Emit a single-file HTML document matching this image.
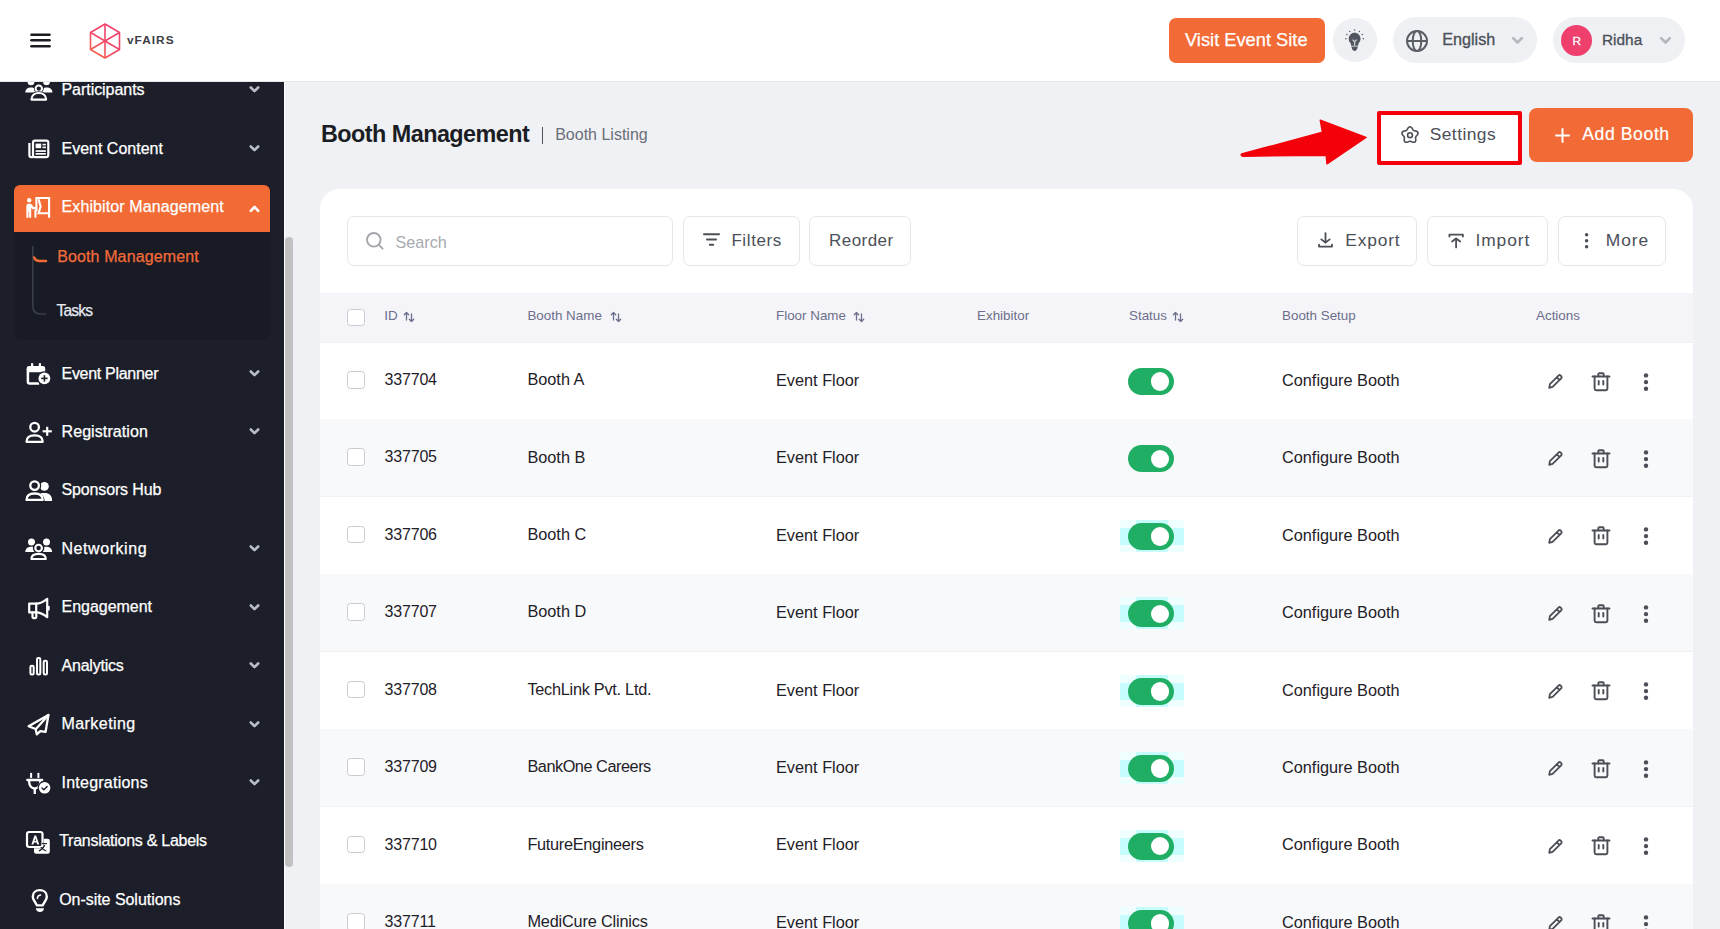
<!DOCTYPE html>
<html><head><meta charset="utf-8"><title>Booth Management</title>
<style>
html,body{margin:0;padding:0;}
body{width:1720px;height:929px;overflow:hidden;position:relative;background:#f0f1f5;font-family:"Liberation Sans",sans-serif;}
.t{position:absolute;white-space:nowrap;}
.r{position:absolute;display:block;}
</style></head><body>
<div class="r" style="left:0px;top:0px;width:1720px;height:81px;background:#fff;"></div>
<div class="r" style="left:0px;top:81px;width:1720px;height:1px;background:#e4e5ea;"></div>
<svg class="r" style="left:30px;top:33px;" width="21" height="15" viewBox="0 0 21 15"><g stroke="#1b1d22" stroke-width="2.6" stroke-linecap="round"><line x1="1.5" y1="1.8" x2="19.5" y2="1.8"/><line x1="1.5" y1="7.3" x2="19.5" y2="7.3"/><line x1="1.5" y1="13.2" x2="19.5" y2="13.2"/></g></svg>
<svg class="r" style="left:88px;top:22px;" width="34" height="38" viewBox="0 0 34 38"><defs><linearGradient id="lg" gradientUnits="userSpaceOnUse" x1="2" y1="36" x2="32" y2="2"><stop offset="0" stop-color="#f7683f"/><stop offset="0.5" stop-color="#f2476a"/><stop offset="1" stop-color="#ef3f6e"/></linearGradient></defs><g fill="none" stroke="url(#lg)" stroke-width="1.6" stroke-linejoin="round"><polygon points="17,2 31.5,10.5 31.5,27.5 17,36 2.5,27.5 2.5,10.5"/><line x1="17" y1="2" x2="17" y2="36"/><line x1="2.5" y1="10.5" x2="31.5" y2="27.5"/><line x1="31.5" y1="10.5" x2="2.5" y2="27.5"/></g></svg>
<div class="t" style="left:127px;top:35.21px;font-size:11.8px;line-height:11.8px;color:#3b3d44;font-weight:700;letter-spacing:1.05px;">vFAIRS</div>
<div class="r" style="left:1169px;top:18px;width:155.5px;height:44.5px;background:#f26a35;border-radius:7px;"></div>
<div class="t" style="left:1185px;top:30.51px;font-size:18.3px;line-height:18.3px;color:#fff;font-weight:400;-webkit-text-stroke:0.25px #fff;">Visit Event Site</div>
<div class="r" style="left:1333px;top:18px;width:44px;height:44px;background:#eef0f3;border-radius:50%;"></div>
<svg class="r" style="left:1344px;top:28px;" width="21" height="25" viewBox="0 0 21 25"><g fill="#50555f"><path d="M6.6 15.2C5.4 14 4.7 12.5 4.7 10.8 4.7 7.5 7.3 4.8 10.6 4.8s5.9 2.7 5.9 6c0 1.7-.7 3.2-1.9 4.4l-.5 2.5H7.1z"/><path d="M7.3 18.4h6.6l-.7 2.4c-.5 1.5-1.4 2.1-2.6 2.1s-2.1-.6-2.6-2.1z"/><circle cx="1.90" cy="10.70" r="0.75"/><circle cx="2.92" cy="6.62" r="0.75"/><circle cx="5.74" cy="3.49" r="0.75"/><circle cx="10.60" cy="2.00" r="0.75"/><circle cx="15.46" cy="3.49" r="0.75"/><circle cx="18.28" cy="6.62" r="0.75"/><circle cx="19.30" cy="10.70" r="0.75"/></g><path d="M8.6 11.6l2 2.2 2-2.2M10.6 13.8v3.6" stroke="#d5d7dc" stroke-width="1.2" fill="none"/></svg>
<div class="r" style="left:1393px;top:17px;width:144px;height:46px;background:#eef0f3;border-radius:23px;"></div>
<svg class="r" style="left:1405px;top:29px;" width="24" height="24" viewBox="0 0 24 24"><g fill="none" stroke="#5a5e66" stroke-width="2"><circle cx="12" cy="12" r="10"/><ellipse cx="12" cy="12" rx="4.3" ry="10"/><line x1="2" y1="12" x2="22" y2="12"/></g></svg>
<div class="t" style="left:1442.2px;top:31.29px;font-size:16.2px;line-height:16.2px;color:#4b4f58;font-weight:400;-webkit-text-stroke:0.3px currentColor;">English</div>
<svg class="r" style="left:1511px;top:36px;" width="13" height="9" viewBox="0 0 13 9"><path d="M2.2 2.2l4.3 4.3 4.3-4.3" fill="none" stroke="#b3b6bc" stroke-width="2.6" stroke-linecap="round" stroke-linejoin="round"/></svg>
<div class="r" style="left:1553px;top:17px;width:131.5px;height:46px;background:#eef0f3;border-radius:23px;"></div>
<div class="r" style="left:1561px;top:25px;width:31px;height:31px;background:#ee3f6d;border-radius:50%;"></div>
<div class="t" style="left:1572.4px;top:35.61px;font-size:11.8px;line-height:11.8px;color:#fff;font-weight:400;-webkit-text-stroke:0.3px #fff;">R</div>
<div class="t" style="left:1602px;top:31.96px;font-size:15.4px;line-height:15.4px;color:#4b4f58;font-weight:400;-webkit-text-stroke:0.3px currentColor;">Ridha</div>
<svg class="r" style="left:1659px;top:36px;" width="13" height="9" viewBox="0 0 13 9"><path d="M2.2 2.2l4.3 4.3 4.3-4.3" fill="none" stroke="#b3b6bc" stroke-width="2.6" stroke-linecap="round" stroke-linejoin="round"/></svg>
<div class="r" style="left:285px;top:82px;width:1435px;height:847px;background:#f0f1f5;"></div>
<div class="r" style="left:0px;top:82px;width:284px;height:847px;background:#1c1f2a;"></div>
<div class="r" style="left:284px;top:82px;width:1px;height:847px;background:#fff;"></div>
<div class="r" style="left:285px;top:237px;width:8px;height:630px;background:#c1c1c1;border-radius:4px;"></div>
<div class="t" style="left:61.5px;top:81.96px;font-size:16px;line-height:16px;color:#fff;font-weight:400;-webkit-text-stroke:0.25px currentColor;letter-spacing:-0.05px;">Participants</div>
<svg class="r" style="left:249px;top:85.0px;" width="11" height="9" viewBox="0 0 11 9"><path d="M1.8 2.5L5.5 6.2 9.2 2.5" fill="none" stroke="#b9bcc3" stroke-width="2.6" stroke-linecap="round" stroke-linejoin="round"/></svg>
<div class="t" style="left:61.5px;top:140.56px;font-size:16px;line-height:16px;color:#fff;font-weight:400;-webkit-text-stroke:0.25px currentColor;letter-spacing:0px;">Event Content</div>
<svg class="r" style="left:249px;top:143.6px;" width="11" height="9" viewBox="0 0 11 9"><path d="M1.8 2.5L5.5 6.2 9.2 2.5" fill="none" stroke="#b9bcc3" stroke-width="2.6" stroke-linecap="round" stroke-linejoin="round"/></svg>
<div class="t" style="left:61.5px;top:365.66px;font-size:16px;line-height:16px;color:#fff;font-weight:400;-webkit-text-stroke:0.25px currentColor;letter-spacing:-0.29px;">Event Planner</div>
<svg class="r" style="left:249px;top:368.7px;" width="11" height="9" viewBox="0 0 11 9"><path d="M1.8 2.5L5.5 6.2 9.2 2.5" fill="none" stroke="#b9bcc3" stroke-width="2.6" stroke-linecap="round" stroke-linejoin="round"/></svg>
<div class="t" style="left:61.5px;top:424.06px;font-size:16px;line-height:16px;color:#fff;font-weight:400;-webkit-text-stroke:0.25px currentColor;letter-spacing:0.09px;">Registration</div>
<svg class="r" style="left:249px;top:427.1px;" width="11" height="9" viewBox="0 0 11 9"><path d="M1.8 2.5L5.5 6.2 9.2 2.5" fill="none" stroke="#b9bcc3" stroke-width="2.6" stroke-linecap="round" stroke-linejoin="round"/></svg>
<div class="t" style="left:61.5px;top:482.46px;font-size:16px;line-height:16px;color:#fff;font-weight:400;-webkit-text-stroke:0.25px currentColor;letter-spacing:-0.14px;">Sponsors Hub</div>
<div class="t" style="left:61.5px;top:541.06px;font-size:16px;line-height:16px;color:#fff;font-weight:400;-webkit-text-stroke:0.25px currentColor;letter-spacing:0.56px;">Networking</div>
<svg class="r" style="left:249px;top:544.1px;" width="11" height="9" viewBox="0 0 11 9"><path d="M1.8 2.5L5.5 6.2 9.2 2.5" fill="none" stroke="#b9bcc3" stroke-width="2.6" stroke-linecap="round" stroke-linejoin="round"/></svg>
<div class="t" style="left:61.5px;top:599.46px;font-size:16px;line-height:16px;color:#fff;font-weight:400;-webkit-text-stroke:0.25px currentColor;letter-spacing:-0.02px;">Engagement</div>
<svg class="r" style="left:249px;top:602.5px;" width="11" height="9" viewBox="0 0 11 9"><path d="M1.8 2.5L5.5 6.2 9.2 2.5" fill="none" stroke="#b9bcc3" stroke-width="2.6" stroke-linecap="round" stroke-linejoin="round"/></svg>
<div class="t" style="left:61.5px;top:657.96px;font-size:16px;line-height:16px;color:#fff;font-weight:400;-webkit-text-stroke:0.25px currentColor;letter-spacing:-0.22px;">Analytics</div>
<svg class="r" style="left:249px;top:661.0px;" width="11" height="9" viewBox="0 0 11 9"><path d="M1.8 2.5L5.5 6.2 9.2 2.5" fill="none" stroke="#b9bcc3" stroke-width="2.6" stroke-linecap="round" stroke-linejoin="round"/></svg>
<div class="t" style="left:61.5px;top:716.46px;font-size:16px;line-height:16px;color:#fff;font-weight:400;-webkit-text-stroke:0.25px currentColor;letter-spacing:0.44px;">Marketing</div>
<svg class="r" style="left:249px;top:719.5px;" width="11" height="9" viewBox="0 0 11 9"><path d="M1.8 2.5L5.5 6.2 9.2 2.5" fill="none" stroke="#b9bcc3" stroke-width="2.6" stroke-linecap="round" stroke-linejoin="round"/></svg>
<div class="t" style="left:61.5px;top:775.16px;font-size:16px;line-height:16px;color:#fff;font-weight:400;-webkit-text-stroke:0.25px currentColor;letter-spacing:0.24px;">Integrations</div>
<svg class="r" style="left:249px;top:778.2px;" width="11" height="9" viewBox="0 0 11 9"><path d="M1.8 2.5L5.5 6.2 9.2 2.5" fill="none" stroke="#b9bcc3" stroke-width="2.6" stroke-linecap="round" stroke-linejoin="round"/></svg>
<div class="t" style="left:59.2px;top:833.36px;font-size:16px;line-height:16px;color:#fff;font-weight:400;-webkit-text-stroke:0.25px currentColor;letter-spacing:-0.27px;">Translations &amp; Labels</div>
<div class="t" style="left:59.2px;top:891.96px;font-size:16px;line-height:16px;color:#fff;font-weight:400;-webkit-text-stroke:0.25px currentColor;letter-spacing:-0.04px;">On-site Solutions</div>
<div class="r" style="left:13.5px;top:184.5px;width:256.5px;height:47.5px;background:#f26b35;border-radius:6px 6px 0 0;"></div>
<div class="t" style="left:61.5px;top:198.66px;font-size:16px;line-height:16px;color:#fff;font-weight:400;-webkit-text-stroke:0.25px currentColor;letter-spacing:0.11px;">Exhibitor Management</div>
<svg class="r" style="left:249px;top:204px;" width="11" height="9" viewBox="0 0 11 9"><path d="M1.8 6.8L5.5 3 9.2 6.8" fill="none" stroke="#fff" stroke-width="2.6" stroke-linecap="round" stroke-linejoin="round"/></svg>
<div class="r" style="left:13.5px;top:232px;width:256.5px;height:108px;background:#181b24;border-radius:0 0 7px 7px;"></div>
<svg class="r" style="left:30px;top:244px;" width="20" height="74" viewBox="0 0 20 74"><path d="M2.8 2v60c0 5 3 8 8 8H16" fill="none" stroke="#3a3e48" stroke-width="1.6"/><path d="M4.2 13.5c1 2.5 3 3.5 5.5 3.5H16" fill="none" stroke="#f26b35" stroke-width="2.6" stroke-linecap="round"/></svg>
<div class="t" style="left:57.2px;top:248.96px;font-size:16px;line-height:16px;color:#f26b3a;font-weight:400;-webkit-text-stroke:0.25px currentColor;letter-spacing:0.12px;">Booth Management</div>
<div class="t" style="left:56.5px;top:302.79px;font-size:15.6px;line-height:15.6px;color:#e6e9ef;font-weight:400;-webkit-text-stroke:0.25px currentColor;letter-spacing:-0.8px;">Tasks</div>
<svg class="r" style="left:0;top:82px" width="284" height="847" viewBox="0 82 284 847"><g fill="#fff"><circle cx="31" cy="81.8" r="3.4"/><circle cx="46.5" cy="81.8" r="3.4"/><path d="M25.3 92.4c0-3.2 2.4-5 5.7-5s5.7 1.8 5.7 5z"/><path d="M41 92.4c0-3.2 2.4-5 5.7-5s5.7 1.8 5.7 5z"/></g><circle cx="38.8" cy="88.6" r="4.9" fill="#1c1f2a"/><circle cx="38.8" cy="88.6" r="3.2" fill="none" stroke="#fff" stroke-width="2"/><path d="M30.3 100.8c0-5 3.4-8 8.5-8s8.5 3 8.5 8z" fill="#1c1f2a" stroke="#1c1f2a" stroke-width="3"/><path d="M31.5 99.6c0-4.2 3-6.6 7.3-6.6s7.3 2.4 7.3 6.6z" fill="none" stroke="#fff" stroke-width="2.2" stroke-linejoin="round"/><g fill="none" stroke="#fff" stroke-width="2.2" stroke-linejoin="round"><rect x="33" y="140.6" width="15.3" height="16.5" rx="2"/><path d="M33 157.1h-1.8c-1 0-1.8-.8-1.8-1.8V143"/></g><g fill="#fff"><rect x="35.6" y="143.6" width="5.6" height="4.6"/><rect x="42.5" y="143.8" width="3.4" height="1.6"/><rect x="42.5" y="146.6" width="3.4" height="1.6"/><rect x="35.6" y="150.2" width="10.3" height="1.7"/><rect x="35.6" y="153" width="10.3" height="1.7"/></g><g fill="#fff"><circle cx="29.2" cy="200.2" r="2.2"/><path d="M26.4 205.6c0-1.1.8-1.9 1.9-1.9h1.9c.8 0 1.4.4 1.8 1l1.5 2.2h3.1v2.3h-4.2l-1.2-1.4v10h-2.1v-6h-.6v6h-2.1z"/><rect x="34.4" y="210" width="2.1" height="7.7"/></g><g fill="none" stroke="#fff" stroke-width="2.1" stroke-linejoin="miter"><path d="M36.4 211.5V198h12.7v19.7"/><path d="M38.6 199.2l2 7.3-2 6.8h9.6"/></g><g fill="#fff"><rect x="26.7" y="366" width="18.5" height="6.2" rx="2.4"/><rect x="31" y="363.2" width="2.2" height="4"/><rect x="38.8" y="363.2" width="2.2" height="4"/></g><path d="M27.9 369v12.8c0 1 .8 1.8 1.8 1.8h9.5" fill="none" stroke="#fff" stroke-width="2.5"/><path d="M44 369.5v3" stroke="#fff" stroke-width="2.4"/><circle cx="44.4" cy="378.4" r="7.2" fill="#1c1f2a"/><circle cx="44.4" cy="378.4" r="5.9" fill="#fff"/><g stroke="#1c1f2a" stroke-width="1.6"><line x1="41.2" y1="378.4" x2="47.6" y2="378.4"/><line x1="44.4" y1="375.2" x2="44.4" y2="381.6"/></g><g fill="none" stroke="#fff" stroke-width="2.3" stroke-linejoin="round"><circle cx="34.6" cy="427.2" r="4.3"/><path d="M26.5 441.8c0-4.6 3.4-6.4 8.1-6.4s8.1 1.8 8.1 6.4z"/></g><g stroke="#fff" stroke-width="2.2"><line x1="42.6" y1="431.3" x2="51.8" y2="431.3"/><line x1="47.2" y1="426.8" x2="47.2" y2="435.8"/></g><g fill="#fff"><circle cx="44.4" cy="486.3" r="4.4"/><path d="M41.5 501c0-.5 0-5.5-1-7.8 1-.2 2.5-.3 4-.3 4.6 0 7.6 2.6 7.6 7.1V501z"/></g><circle cx="34.6" cy="485.6" r="6.6" fill="#1c1f2a"/><path d="M24.5 502.2c0-6.4 4-9.4 10.1-9.4s10.1 3 10.1 9.4z" fill="#1c1f2a"/><g fill="none" stroke="#fff" stroke-width="2.3" stroke-linejoin="round"><circle cx="34.6" cy="485.6" r="4.3"/><path d="M26.5 499.9c0-4.6 3.4-6.4 8.1-6.4s8.1 1.8 8.1 6.4z"/></g><g fill="#fff"><circle cx="31.5" cy="542.1" r="3.5"/><circle cx="46.5" cy="542.1" r="3.5"/><path d="M25.3 552c0-3.5 2.6-5.3 6.2-5.3 2 0 3.6.5 4.6 1.5L35 552z"/><path d="M52.1 552c0-3.5-2.6-5.3-6.2-5.3-2 0-3.6.5-4.6 1.5L42.3 552z"/></g><circle cx="38.6" cy="548" r="5.8" fill="#1c1f2a"/><path d="M28.8 561.5c0-5 3.6-8 9.8-8s9.8 3 9.8 8z" fill="#1c1f2a"/><g fill="none" stroke="#fff" stroke-width="2.1" stroke-linejoin="round"><circle cx="38.6" cy="548" r="3.3"/><path d="M31.4 559c0-3.6 2.8-5.1 7.2-5.1s7.2 1.5 7.2 5.1z"/></g><g fill="none" stroke="#fff" stroke-width="2.2" stroke-linejoin="round" stroke-linecap="round"><path d="M29.2 603.6h7c3.5 0 7.5-2 11-4.8v18.4c-3.5-2.8-7.5-4.8-11-4.8h-7z"/><path d="M32.5 612.4v4.7c0 .6.4 1 1 1h1.8c.6 0 1-.4 1-1v-4.7"/><line x1="36.2" y1="603.6" x2="36.2" y2="612.4"/><path d="M48.6 606.8v2.8"/></g><g fill="none" stroke="#fff" stroke-width="2" stroke-linejoin="round"><rect x="30.4" y="665.8" width="3.3" height="8.8" rx="1.3"/><rect x="37" y="658.1" width="3.3" height="16.5" rx="1.3"/><rect x="43.7" y="660.8" width="3.3" height="13.8" rx="1.3"/></g><g fill="none" stroke="#fff" stroke-width="2.3" stroke-linejoin="round" stroke-linecap="round"><path d="M48.4 715 L28.6 726.2 L35.6 729 L36.8 734.3 L40.3 731.2 L45.6 731.8 Z"/><path d="M48.4 715 L36 729"/></g><g fill="#fff"><rect x="30.1" y="772.9" width="2" height="5"/><rect x="37.4" y="772.9" width="2" height="5"/><rect x="33.6" y="788" width="2.3" height="6"/></g><g fill="none" stroke="#fff" stroke-width="2.3" stroke-linecap="round" stroke-linejoin="round"><line x1="27.3" y1="780" x2="42.2" y2="780"/><path d="M29.2 780.5v1.8c0 3.6 2.5 6.2 5.5 6.2s5.5-2.6 5.5-6.2v-1.8"/></g><circle cx="44.6" cy="787.8" r="7" fill="#1c1f2a"/><circle cx="44.6" cy="787.8" r="5.8" fill="#fff"/><path d="M42 788l1.8 1.7 3.3-3.3" fill="none" stroke="#1c1f2a" stroke-width="1.4" stroke-linecap="round" stroke-linejoin="round"/><rect x="34" y="838.7" width="15.8" height="15.1" rx="2.2" fill="#fff"/><rect x="25.6" y="830.6" width="18.2" height="17.6" rx="2.5" fill="#1c1f2a"/><rect x="27" y="832" width="15.5" height="15" rx="2.2" fill="none" stroke="#fff" stroke-width="2.2"/><path d="M31.4 844.5l3.1-9h1.6l3.1 9h-2l-.6-2h-2.6l-.6 2zm3.1-3.6h1.6l-.8-2.7z" fill="#fff"/><g stroke="#1c1f2a" stroke-width="1.1" fill="none"><path d="M38.8 851c2.5-1 5-3.5 6-6"/><path d="M40.8 847.2c1.5 1.8 3.5 3.3 5.5 3.8"/><line x1="42" y1="843.6" x2="47" y2="843.6"/></g><path d="M37 905.4 L34 900.3 C33.2 899 32.8 897.7 32.8 896.4 C32.8 892.6 35.9 890.1 39.8 890.1 C43.7 890.1 46.8 892.6 46.8 896.4 C46.8 897.7 46.4 899 45.6 900.3 L42.6 905.4 Z" fill="none" stroke="#fff" stroke-width="2.4" stroke-linejoin="round"/><path d="M35.9 908.2h8.1c0 2.2-1.8 3.7-4.05 3.7s-4.05-1.5-4.05-3.7z" fill="#fff"/><path d="M37.4 898.6c0-1.9 1.3-3.4 3.2-3.6" fill="none" stroke="#fff" stroke-width="1.5" stroke-linecap="round"/></svg>
<div class="t" style="left:321px;top:122.79px;font-size:23.4px;line-height:23.4px;color:#1b1d24;font-weight:700;letter-spacing:-0.55px;">Booth Management</div>
<div class="r" style="left:542px;top:127px;width:1.3px;height:17px;background:#50535a;"></div>
<div class="t" style="left:555.2px;top:126.66px;font-size:16px;line-height:16px;color:#6a6e77;font-weight:400;">Booth Listing</div>
<div class="r" style="left:1380px;top:114px;width:139px;height:47px;background:#fff;border-radius:6px;"></div>
<div class="r" style="left:1377px;top:111px;width:145px;height:54px;background:transparent;border:4.3px solid #f4000b;box-sizing:border-box;border-radius:2px;"></div>
<svg class="r" style="left:1401.3px;top:126.3px;" width="18" height="18" viewBox="0 0 18 18"><g fill="none" stroke="#4b4f58" stroke-width="1.6" stroke-linejoin="round"><path d="M16.10 9.20 L15.86 9.49 L15.62 9.76 L15.39 10.01 L15.18 10.24 L14.99 10.47 L14.84 10.70 L14.73 10.93 L14.65 11.17 L14.61 11.42 L14.60 11.69 L14.61 11.99 L14.64 12.30 L14.68 12.64 L14.72 13.00 L14.74 13.37 L14.77 13.77 L14.76 14.17 L14.71 14.56 L14.62 14.94 L14.48 15.28 L14.28 15.59 L14.04 15.85 L13.76 16.05 L13.44 16.20 L13.09 16.29 L12.72 16.32 L12.34 16.29 L11.95 16.21 L11.57 16.10 L11.19 15.95 L10.85 15.81 L10.52 15.67 L10.21 15.52 L9.92 15.40 L9.64 15.29 L9.38 15.22 L9.13 15.18 L8.87 15.18 L8.62 15.22 L8.36 15.29 L8.08 15.40 L7.79 15.52 L7.48 15.67 L7.15 15.81 L6.81 15.95 L6.43 16.10 L6.05 16.21 L5.66 16.29 L5.28 16.32 L4.91 16.29 L4.56 16.20 L4.24 16.05 L3.96 15.85 L3.72 15.59 L3.52 15.28 L3.38 14.94 L3.29 14.56 L3.24 14.17 L3.23 13.77 L3.26 13.37 L3.28 13.00 L3.32 12.64 L3.36 12.30 L3.39 11.99 L3.40 11.69 L3.39 11.42 L3.35 11.17 L3.27 10.93 L3.16 10.70 L3.01 10.47 L2.82 10.24 L2.61 10.01 L2.38 9.76 L2.14 9.49 L1.90 9.20 L1.65 8.89 L1.42 8.56 L1.23 8.22 L1.08 7.86 L1.00 7.50 L0.97 7.14 L1.01 6.79 L1.12 6.46 L1.29 6.15 L1.52 5.87 L1.81 5.63 L2.13 5.43 L2.49 5.26 L2.87 5.13 L3.26 5.03 L3.62 4.94 L3.97 4.86 L4.31 4.79 L4.62 4.72 L4.90 4.65 L5.16 4.55 L5.38 4.44 L5.59 4.29 L5.77 4.11 L5.94 3.89 L6.10 3.65 L6.26 3.37 L6.43 3.08 L6.61 2.76 L6.81 2.45 L7.02 2.11 L7.26 1.79 L7.53 1.50 L7.83 1.26 L8.14 1.06 L8.48 0.93 L8.83 0.86 L9.17 0.86 L9.52 0.93 L9.86 1.06 L10.17 1.26 L10.47 1.50 L10.74 1.79 L10.98 2.11 L11.19 2.45 L11.39 2.76 L11.57 3.08 L11.74 3.37 L11.90 3.65 L12.06 3.89 L12.23 4.11 L12.41 4.29 L12.62 4.44 L12.84 4.55 L13.10 4.65 L13.38 4.72 L13.69 4.79 L14.03 4.86 L14.38 4.94 L14.74 5.03 L15.13 5.13 L15.51 5.26 L15.87 5.43 L16.19 5.63 L16.48 5.87 L16.71 6.15 L16.88 6.46 L16.99 6.79 L17.03 7.14 L17.00 7.50 L16.92 7.86 L16.77 8.22 L16.58 8.56 L16.35 8.89 L16.10 9.20Z"/><circle cx="9" cy="9.2" r="2.4"/></g></svg>
<div class="t" style="left:1429.7px;top:125.77px;font-size:17.4px;line-height:17.4px;color:#4b4f58;font-weight:400;letter-spacing:0.45px;">Settings</div>
<svg class="r" style="left:1236px;top:116px;" width="134" height="52" viewBox="0 0 134 52"><path d="M6.5 37.8 L86.5 16.3 L84.3 4.2 L130 21.5 L91 47.8 L90.2 39.2 L6.8 40.2 Q3.6 39 6.5 37.8 Z" fill="#f4000b" stroke="#f4000b" stroke-width="1.5" stroke-linejoin="round"/></svg>
<div class="r" style="left:1529px;top:108px;width:164px;height:53.5px;background:#f26a35;border-radius:8px;"></div>
<svg class="r" style="left:1555px;top:128px;" width="15" height="15" viewBox="0 0 15 15"><g stroke="#fff" stroke-width="2" stroke-linecap="round"><line x1="7.5" y1="1" x2="7.5" y2="14"/><line x1="1" y1="7.5" x2="14" y2="7.5"/></g></svg>
<div class="t" style="left:1582.2px;top:125.60px;font-size:17.6px;line-height:17.6px;color:#fff;font-weight:400;letter-spacing:0.6px;-webkit-text-stroke:0.2px #fff;">Add Booth</div>
<div class="r" style="left:320px;top:189px;width:1373px;height:800px;background:#fff;border-radius:20px 20px 0 0;"></div>
<div class="r" style="left:347px;top:216px;width:326px;height:49.5px;background:#fff;border:1.2px solid #e5e6ea;border-radius:7px;box-sizing:border-box;"></div>
<svg class="r" style="left:365px;top:231px;" width="20" height="20" viewBox="0 0 20 20"><g fill="none" stroke="#a3a6ac" stroke-width="1.9" stroke-linecap="round"><circle cx="8.8" cy="8.8" r="6.8"/><line x1="13.8" y1="13.8" x2="17.6" y2="17.6"/></g></svg>
<div class="t" style="left:395.5px;top:233.89px;font-size:16.2px;line-height:16.2px;color:#a7aab0;font-weight:400;">Search</div>
<div class="r" style="left:683px;top:216px;width:116.5px;height:49.5px;background:#fff;border:1.2px solid #e5e6ea;border-radius:7px;box-sizing:border-box;"></div>
<svg class="r" style="left:702px;top:232px;" width="19" height="15" viewBox="0 0 19 15"><g stroke="#4b4f58" stroke-width="2" stroke-linecap="round"><line x1="2" y1="2.2" x2="17" y2="2.2"/><line x1="5" y1="7.5" x2="14" y2="7.5"/><line x1="7.8" y1="12.8" x2="11.2" y2="12.8"/></g></svg>
<div class="t" style="left:731.4px;top:232.21px;font-size:17px;line-height:17px;color:#4b4f58;font-weight:400;letter-spacing:0.6px;">Filters</div>
<div class="r" style="left:809px;top:216px;width:101.5px;height:49.5px;background:#fff;border:1.2px solid #e5e6ea;border-radius:7px;box-sizing:border-box;"></div>
<div class="t" style="left:829px;top:232.21px;font-size:17px;line-height:17px;color:#4b4f58;font-weight:400;letter-spacing:0.45px;">Reorder</div>
<div class="r" style="left:1297px;top:216px;width:120px;height:49.5px;background:#fff;border:1.2px solid #e5e6ea;border-radius:7px;box-sizing:border-box;"></div>
<svg class="r" style="left:1317px;top:232px;" width="17" height="17" viewBox="0 0 17 17"><g fill="none" stroke="#4b4f58" stroke-width="1.8" stroke-linecap="round" stroke-linejoin="round"><line x1="8.5" y1="1.2" x2="8.5" y2="10.3"/><path d="M4.3 7.4l4.2 3.1 4.2-3.1"/><path d="M2 12.6v2h13v-2"/></g></svg>
<div class="t" style="left:1345.3px;top:231.87px;font-size:17.4px;line-height:17.4px;color:#4b4f58;font-weight:400;letter-spacing:0.8px;">Export</div>
<div class="r" style="left:1426.5px;top:216px;width:121px;height:49.5px;background:#fff;border:1.2px solid #e5e6ea;border-radius:7px;box-sizing:border-box;"></div>
<svg class="r" style="left:1447px;top:232px;" width="17" height="17" viewBox="0 0 17 17"><g fill="none" stroke="#4b4f58" stroke-width="1.8" stroke-linecap="round" stroke-linejoin="round"><path d="M2.4 4.5V2.7h13.5v1.8"/><path d="M5.1 9.5l4-3 4.1 3"/><line x1="9.1" y1="6.8" x2="9.1" y2="15.4"/></g></svg>
<div class="t" style="left:1475.5px;top:231.87px;font-size:17.4px;line-height:17.4px;color:#4b4f58;font-weight:400;letter-spacing:0.9px;">Import</div>
<div class="r" style="left:1557.5px;top:216px;width:108px;height:49.5px;background:#fff;border:1.2px solid #e5e6ea;border-radius:7px;box-sizing:border-box;"></div>
<svg class="r" style="left:1584px;top:232px;" width="6" height="18" viewBox="0 0 6 18"><g fill="#4b4f58"><circle cx="2.6" cy="2.7" r="1.75"/><circle cx="2.6" cy="8.8" r="1.75"/><circle cx="2.6" cy="14.8" r="1.75"/></g></svg>
<div class="t" style="left:1605.8px;top:231.87px;font-size:17.4px;line-height:17.4px;color:#4b4f58;font-weight:400;letter-spacing:0.9px;">More</div>
<div class="r" style="left:320px;top:292.5px;width:1373px;height:49.5px;background:#f5f5f9;"></div>
<div class="r" style="left:320px;top:341.5px;width:1373px;height:1px;background:#eeeff3;"></div>
<div class="r" style="left:347px;top:308.8px;width:17.5px;height:17.5px;background:#fff;border:1.2px solid #c9cbd0;border-radius:3.5px;box-sizing:border-box;"></div>
<div class="t" style="left:384.2px;top:308.96px;font-size:13.4px;line-height:13.4px;color:#6c6f8b;font-weight:400;">ID</div>
<svg class="r" style="left:403px;top:311px;" width="12" height="12" viewBox="0 0 12 12"><g fill="none" stroke="#6c6f8b" stroke-width="1.3" stroke-linecap="round" stroke-linejoin="round"><path d="M3.5 9V1.5M1.3 3.7L3.5 1.5 5.7 3.7"/><path d="M8.5 3v7.5M6.3 8.3l2.2 2.2 2.2-2.2"/></g></svg>
<div class="t" style="left:527.4px;top:308.96px;font-size:13.4px;line-height:13.4px;color:#6c6f8b;font-weight:400;">Booth Name</div>
<svg class="r" style="left:609.5px;top:311px;" width="12" height="12" viewBox="0 0 12 12"><g fill="none" stroke="#6c6f8b" stroke-width="1.3" stroke-linecap="round" stroke-linejoin="round"><path d="M3.5 9V1.5M1.3 3.7L3.5 1.5 5.7 3.7"/><path d="M8.5 3v7.5M6.3 8.3l2.2 2.2 2.2-2.2"/></g></svg>
<div class="t" style="left:776px;top:308.96px;font-size:13.4px;line-height:13.4px;color:#6c6f8b;font-weight:400;">Floor Name</div>
<svg class="r" style="left:853px;top:311px;" width="12" height="12" viewBox="0 0 12 12"><g fill="none" stroke="#6c6f8b" stroke-width="1.3" stroke-linecap="round" stroke-linejoin="round"><path d="M3.5 9V1.5M1.3 3.7L3.5 1.5 5.7 3.7"/><path d="M8.5 3v7.5M6.3 8.3l2.2 2.2 2.2-2.2"/></g></svg>
<div class="t" style="left:977px;top:308.96px;font-size:13.4px;line-height:13.4px;color:#6c6f8b;font-weight:400;">Exhibitor</div>
<div class="t" style="left:1129px;top:308.96px;font-size:13.4px;line-height:13.4px;color:#6c6f8b;font-weight:400;">Status</div>
<svg class="r" style="left:1172px;top:311px;" width="12" height="12" viewBox="0 0 12 12"><g fill="none" stroke="#6c6f8b" stroke-width="1.3" stroke-linecap="round" stroke-linejoin="round"><path d="M3.5 9V1.5M1.3 3.7L3.5 1.5 5.7 3.7"/><path d="M8.5 3v7.5M6.3 8.3l2.2 2.2 2.2-2.2"/></g></svg>
<div class="t" style="left:1282px;top:308.96px;font-size:13.4px;line-height:13.4px;color:#6c6f8b;font-weight:400;">Booth Setup</div>
<div class="t" style="left:1536px;top:308.96px;font-size:13.4px;line-height:13.4px;color:#6c6f8b;font-weight:400;">Actions</div>
<div class="r" style="left:347px;top:371.0px;width:17.5px;height:17.5px;background:#fff;border:1.2px solid #c9cbd0;border-radius:3.5px;box-sizing:border-box;"></div>
<div class="t" style="left:384.6px;top:371.96px;font-size:16px;line-height:16px;color:#1f2128;font-weight:400;letter-spacing:-0.2px;">337704</div>
<div class="t" style="left:527.4px;top:371.10px;font-size:16.3px;line-height:16.3px;color:#1f2128;font-weight:400;letter-spacing:0px;">Booth A</div>
<div class="t" style="left:776px;top:371.70px;font-size:16.3px;line-height:16.3px;color:#1f2128;font-weight:400;">Event Floor</div>
<div class="r" style="left:1128px;top:368.0px;width:45.5px;height:27px;background:#20ae65;border-radius:14px;"></div>
<div class="r" style="left:1150.5px;top:372.2px;width:18.6px;height:18.6px;background:#fff;border-radius:50%;"></div>
<div class="t" style="left:1282px;top:371.70px;font-size:16.3px;line-height:16.3px;color:#1f2128;font-weight:400;">Configure Booth</div>
<svg class="r" style="left:1547px;top:373.0px;" width="17" height="17" viewBox="0 0 17 17"><path d="M2.2 14.8l.7-3.6 8.6-8.6c.6-.6 1.5-.6 2.1 0l.6.6c.6.6.6 1.5 0 2.1l-8.6 8.6zM9.8 4.3l2.9 2.9" fill="none" stroke="#4b4e56" stroke-width="1.8" stroke-linejoin="round"/></svg>
<svg class="r" style="left:1591px;top:371.5px;" width="20" height="20" viewBox="0 0 20 20"><g fill="none" stroke="#4b4e56" stroke-width="1.9" stroke-linejoin="round" stroke-linecap="round"><line x1="1.5" y1="4.5" x2="18.5" y2="4.5"/><path d="M7.3 4.2V2.2c0-.5.4-.9.9-.9h3.6c.5 0 .9.4.9.9v2"/><path d="M3.6 4.5v12.3c0 .9.6 1.5 1.5 1.5h9.8c.9 0 1.5-.6 1.5-1.5V4.5"/><line x1="7.7" y1="9" x2="7.7" y2="12.5"/><line x1="12.3" y1="9" x2="12.3" y2="12.5"/></g></svg>
<svg class="r" style="left:1643px;top:372.5px;" width="6" height="18" viewBox="0 0 6 18"><g fill="#4b4e56"><circle cx="3" cy="2.4" r="2.2"/><circle cx="3" cy="9.1" r="2.2"/><circle cx="3" cy="15.8" r="2.2"/></g></svg>
<div class="r" style="left:320px;top:419.45px;width:1373px;height:77.45px;background:#f8f9fb;"></div>
<div class="r" style="left:320px;top:495.9px;width:1373px;height:1px;background:#f0f1f3;"></div>
<div class="r" style="left:347px;top:448.45px;width:17.5px;height:17.5px;background:#fff;border:1.2px solid #c9cbd0;border-radius:3.5px;box-sizing:border-box;"></div>
<div class="t" style="left:384.6px;top:449.41px;font-size:16px;line-height:16px;color:#1f2128;font-weight:400;letter-spacing:-0.2px;">337705</div>
<div class="t" style="left:527.4px;top:448.55px;font-size:16.3px;line-height:16.3px;color:#1f2128;font-weight:400;letter-spacing:0px;">Booth B</div>
<div class="t" style="left:776px;top:449.15px;font-size:16.3px;line-height:16.3px;color:#1f2128;font-weight:400;">Event Floor</div>
<div class="r" style="left:1128px;top:445.45px;width:45.5px;height:27px;background:#20ae65;border-radius:14px;"></div>
<div class="r" style="left:1150.5px;top:449.65px;width:18.6px;height:18.6px;background:#fff;border-radius:50%;"></div>
<div class="t" style="left:1282px;top:449.15px;font-size:16.3px;line-height:16.3px;color:#1f2128;font-weight:400;">Configure Booth</div>
<svg class="r" style="left:1547px;top:450.45px;" width="17" height="17" viewBox="0 0 17 17"><path d="M2.2 14.8l.7-3.6 8.6-8.6c.6-.6 1.5-.6 2.1 0l.6.6c.6.6.6 1.5 0 2.1l-8.6 8.6zM9.8 4.3l2.9 2.9" fill="none" stroke="#4b4e56" stroke-width="1.8" stroke-linejoin="round"/></svg>
<svg class="r" style="left:1591px;top:448.95px;" width="20" height="20" viewBox="0 0 20 20"><g fill="none" stroke="#4b4e56" stroke-width="1.9" stroke-linejoin="round" stroke-linecap="round"><line x1="1.5" y1="4.5" x2="18.5" y2="4.5"/><path d="M7.3 4.2V2.2c0-.5.4-.9.9-.9h3.6c.5 0 .9.4.9.9v2"/><path d="M3.6 4.5v12.3c0 .9.6 1.5 1.5 1.5h9.8c.9 0 1.5-.6 1.5-1.5V4.5"/><line x1="7.7" y1="9" x2="7.7" y2="12.5"/><line x1="12.3" y1="9" x2="12.3" y2="12.5"/></g></svg>
<svg class="r" style="left:1643px;top:449.95px;" width="6" height="18" viewBox="0 0 6 18"><g fill="#4b4e56"><circle cx="3" cy="2.4" r="2.2"/><circle cx="3" cy="9.1" r="2.2"/><circle cx="3" cy="15.8" r="2.2"/></g></svg>
<div class="r" style="left:347px;top:525.9px;width:17.5px;height:17.5px;background:#fff;border:1.2px solid #c9cbd0;border-radius:3.5px;box-sizing:border-box;"></div>
<div class="t" style="left:384.6px;top:526.86px;font-size:16px;line-height:16px;color:#1f2128;font-weight:400;letter-spacing:-0.2px;">337706</div>
<div class="t" style="left:527.4px;top:526.00px;font-size:16.3px;line-height:16.3px;color:#1f2128;font-weight:400;letter-spacing:0px;">Booth C</div>
<div class="t" style="left:776px;top:526.60px;font-size:16.3px;line-height:16.3px;color:#1f2128;font-weight:400;">Event Floor</div>
<div class="r" style="left:1120px;top:519.9px;width:64px;height:32px;background:#effefe;"></div>
<div class="r" style="left:1120px;top:527.9px;width:64px;height:17px;background:#c6fcfc;"></div>
<div class="r" style="left:1136px;top:519.9px;width:32px;height:32px;background:#c6fcfc;"></div>
<div class="r" style="left:1128px;top:522.9px;width:45.5px;height:27px;background:#20ae65;border-radius:14px;"></div>
<div class="r" style="left:1150.5px;top:527.1px;width:18.6px;height:18.6px;background:#fff;border-radius:50%;"></div>
<div class="t" style="left:1282px;top:526.60px;font-size:16.3px;line-height:16.3px;color:#1f2128;font-weight:400;">Configure Booth</div>
<svg class="r" style="left:1547px;top:527.9px;" width="17" height="17" viewBox="0 0 17 17"><path d="M2.2 14.8l.7-3.6 8.6-8.6c.6-.6 1.5-.6 2.1 0l.6.6c.6.6.6 1.5 0 2.1l-8.6 8.6zM9.8 4.3l2.9 2.9" fill="none" stroke="#4b4e56" stroke-width="1.8" stroke-linejoin="round"/></svg>
<svg class="r" style="left:1591px;top:526.4px;" width="20" height="20" viewBox="0 0 20 20"><g fill="none" stroke="#4b4e56" stroke-width="1.9" stroke-linejoin="round" stroke-linecap="round"><line x1="1.5" y1="4.5" x2="18.5" y2="4.5"/><path d="M7.3 4.2V2.2c0-.5.4-.9.9-.9h3.6c.5 0 .9.4.9.9v2"/><path d="M3.6 4.5v12.3c0 .9.6 1.5 1.5 1.5h9.8c.9 0 1.5-.6 1.5-1.5V4.5"/><line x1="7.7" y1="9" x2="7.7" y2="12.5"/><line x1="12.3" y1="9" x2="12.3" y2="12.5"/></g></svg>
<svg class="r" style="left:1643px;top:527.4px;" width="6" height="18" viewBox="0 0 6 18"><g fill="#4b4e56"><circle cx="3" cy="2.4" r="2.2"/><circle cx="3" cy="9.1" r="2.2"/><circle cx="3" cy="15.8" r="2.2"/></g></svg>
<div class="r" style="left:320px;top:574.35px;width:1373px;height:77.45px;background:#f8f9fb;"></div>
<div class="r" style="left:320px;top:650.8000000000001px;width:1373px;height:1px;background:#f0f1f3;"></div>
<div class="r" style="left:347px;top:603.35px;width:17.5px;height:17.5px;background:#fff;border:1.2px solid #c9cbd0;border-radius:3.5px;box-sizing:border-box;"></div>
<div class="t" style="left:384.6px;top:604.31px;font-size:16px;line-height:16px;color:#1f2128;font-weight:400;letter-spacing:-0.2px;">337707</div>
<div class="t" style="left:527.4px;top:603.45px;font-size:16.3px;line-height:16.3px;color:#1f2128;font-weight:400;letter-spacing:0px;">Booth D</div>
<div class="t" style="left:776px;top:604.05px;font-size:16.3px;line-height:16.3px;color:#1f2128;font-weight:400;">Event Floor</div>
<div class="r" style="left:1120px;top:597.35px;width:64px;height:32px;background:#effefe;"></div>
<div class="r" style="left:1120px;top:605.35px;width:64px;height:17px;background:#c6fcfc;"></div>
<div class="r" style="left:1136px;top:597.35px;width:32px;height:32px;background:#c6fcfc;"></div>
<div class="r" style="left:1128px;top:600.35px;width:45.5px;height:27px;background:#20ae65;border-radius:14px;"></div>
<div class="r" style="left:1150.5px;top:604.5500000000001px;width:18.6px;height:18.6px;background:#fff;border-radius:50%;"></div>
<div class="t" style="left:1282px;top:604.05px;font-size:16.3px;line-height:16.3px;color:#1f2128;font-weight:400;">Configure Booth</div>
<svg class="r" style="left:1547px;top:605.35px;" width="17" height="17" viewBox="0 0 17 17"><path d="M2.2 14.8l.7-3.6 8.6-8.6c.6-.6 1.5-.6 2.1 0l.6.6c.6.6.6 1.5 0 2.1l-8.6 8.6zM9.8 4.3l2.9 2.9" fill="none" stroke="#4b4e56" stroke-width="1.8" stroke-linejoin="round"/></svg>
<svg class="r" style="left:1591px;top:603.85px;" width="20" height="20" viewBox="0 0 20 20"><g fill="none" stroke="#4b4e56" stroke-width="1.9" stroke-linejoin="round" stroke-linecap="round"><line x1="1.5" y1="4.5" x2="18.5" y2="4.5"/><path d="M7.3 4.2V2.2c0-.5.4-.9.9-.9h3.6c.5 0 .9.4.9.9v2"/><path d="M3.6 4.5v12.3c0 .9.6 1.5 1.5 1.5h9.8c.9 0 1.5-.6 1.5-1.5V4.5"/><line x1="7.7" y1="9" x2="7.7" y2="12.5"/><line x1="12.3" y1="9" x2="12.3" y2="12.5"/></g></svg>
<svg class="r" style="left:1643px;top:604.85px;" width="6" height="18" viewBox="0 0 6 18"><g fill="#4b4e56"><circle cx="3" cy="2.4" r="2.2"/><circle cx="3" cy="9.1" r="2.2"/><circle cx="3" cy="15.8" r="2.2"/></g></svg>
<div class="r" style="left:347px;top:680.8px;width:17.5px;height:17.5px;background:#fff;border:1.2px solid #c9cbd0;border-radius:3.5px;box-sizing:border-box;"></div>
<div class="t" style="left:384.6px;top:681.76px;font-size:16px;line-height:16px;color:#1f2128;font-weight:400;letter-spacing:-0.2px;">337708</div>
<div class="t" style="left:527.4px;top:680.90px;font-size:16.3px;line-height:16.3px;color:#1f2128;font-weight:400;letter-spacing:-0.26px;">TechLink Pvt. Ltd.</div>
<div class="t" style="left:776px;top:681.50px;font-size:16.3px;line-height:16.3px;color:#1f2128;font-weight:400;">Event Floor</div>
<div class="r" style="left:1120px;top:674.8px;width:64px;height:32px;background:#effefe;"></div>
<div class="r" style="left:1120px;top:682.8px;width:64px;height:17px;background:#c6fcfc;"></div>
<div class="r" style="left:1136px;top:674.8px;width:32px;height:32px;background:#c6fcfc;"></div>
<div class="r" style="left:1128px;top:677.8px;width:45.5px;height:27px;background:#20ae65;border-radius:14px;"></div>
<div class="r" style="left:1150.5px;top:682.0px;width:18.6px;height:18.6px;background:#fff;border-radius:50%;"></div>
<div class="t" style="left:1282px;top:681.50px;font-size:16.3px;line-height:16.3px;color:#1f2128;font-weight:400;">Configure Booth</div>
<svg class="r" style="left:1547px;top:682.8px;" width="17" height="17" viewBox="0 0 17 17"><path d="M2.2 14.8l.7-3.6 8.6-8.6c.6-.6 1.5-.6 2.1 0l.6.6c.6.6.6 1.5 0 2.1l-8.6 8.6zM9.8 4.3l2.9 2.9" fill="none" stroke="#4b4e56" stroke-width="1.8" stroke-linejoin="round"/></svg>
<svg class="r" style="left:1591px;top:681.3px;" width="20" height="20" viewBox="0 0 20 20"><g fill="none" stroke="#4b4e56" stroke-width="1.9" stroke-linejoin="round" stroke-linecap="round"><line x1="1.5" y1="4.5" x2="18.5" y2="4.5"/><path d="M7.3 4.2V2.2c0-.5.4-.9.9-.9h3.6c.5 0 .9.4.9.9v2"/><path d="M3.6 4.5v12.3c0 .9.6 1.5 1.5 1.5h9.8c.9 0 1.5-.6 1.5-1.5V4.5"/><line x1="7.7" y1="9" x2="7.7" y2="12.5"/><line x1="12.3" y1="9" x2="12.3" y2="12.5"/></g></svg>
<svg class="r" style="left:1643px;top:682.3px;" width="6" height="18" viewBox="0 0 6 18"><g fill="#4b4e56"><circle cx="3" cy="2.4" r="2.2"/><circle cx="3" cy="9.1" r="2.2"/><circle cx="3" cy="15.8" r="2.2"/></g></svg>
<div class="r" style="left:320px;top:729.25px;width:1373px;height:77.45px;background:#f8f9fb;"></div>
<div class="r" style="left:320px;top:805.7px;width:1373px;height:1px;background:#f0f1f3;"></div>
<div class="r" style="left:347px;top:758.25px;width:17.5px;height:17.5px;background:#fff;border:1.2px solid #c9cbd0;border-radius:3.5px;box-sizing:border-box;"></div>
<div class="t" style="left:384.6px;top:759.21px;font-size:16px;line-height:16px;color:#1f2128;font-weight:400;letter-spacing:-0.2px;">337709</div>
<div class="t" style="left:527.4px;top:758.35px;font-size:16.3px;line-height:16.3px;color:#1f2128;font-weight:400;letter-spacing:-0.46px;">BankOne Careers</div>
<div class="t" style="left:776px;top:758.95px;font-size:16.3px;line-height:16.3px;color:#1f2128;font-weight:400;">Event Floor</div>
<div class="r" style="left:1120px;top:752.25px;width:64px;height:32px;background:#effefe;"></div>
<div class="r" style="left:1120px;top:760.25px;width:64px;height:17px;background:#c6fcfc;"></div>
<div class="r" style="left:1136px;top:752.25px;width:32px;height:32px;background:#c6fcfc;"></div>
<div class="r" style="left:1128px;top:755.25px;width:45.5px;height:27px;background:#20ae65;border-radius:14px;"></div>
<div class="r" style="left:1150.5px;top:759.45px;width:18.6px;height:18.6px;background:#fff;border-radius:50%;"></div>
<div class="t" style="left:1282px;top:758.95px;font-size:16.3px;line-height:16.3px;color:#1f2128;font-weight:400;">Configure Booth</div>
<svg class="r" style="left:1547px;top:760.25px;" width="17" height="17" viewBox="0 0 17 17"><path d="M2.2 14.8l.7-3.6 8.6-8.6c.6-.6 1.5-.6 2.1 0l.6.6c.6.6.6 1.5 0 2.1l-8.6 8.6zM9.8 4.3l2.9 2.9" fill="none" stroke="#4b4e56" stroke-width="1.8" stroke-linejoin="round"/></svg>
<svg class="r" style="left:1591px;top:758.75px;" width="20" height="20" viewBox="0 0 20 20"><g fill="none" stroke="#4b4e56" stroke-width="1.9" stroke-linejoin="round" stroke-linecap="round"><line x1="1.5" y1="4.5" x2="18.5" y2="4.5"/><path d="M7.3 4.2V2.2c0-.5.4-.9.9-.9h3.6c.5 0 .9.4.9.9v2"/><path d="M3.6 4.5v12.3c0 .9.6 1.5 1.5 1.5h9.8c.9 0 1.5-.6 1.5-1.5V4.5"/><line x1="7.7" y1="9" x2="7.7" y2="12.5"/><line x1="12.3" y1="9" x2="12.3" y2="12.5"/></g></svg>
<svg class="r" style="left:1643px;top:759.75px;" width="6" height="18" viewBox="0 0 6 18"><g fill="#4b4e56"><circle cx="3" cy="2.4" r="2.2"/><circle cx="3" cy="9.1" r="2.2"/><circle cx="3" cy="15.8" r="2.2"/></g></svg>
<div class="r" style="left:347px;top:835.7px;width:17.5px;height:17.5px;background:#fff;border:1.2px solid #c9cbd0;border-radius:3.5px;box-sizing:border-box;"></div>
<div class="t" style="left:384.6px;top:836.66px;font-size:16px;line-height:16px;color:#1f2128;font-weight:400;letter-spacing:-0.2px;">337710</div>
<div class="t" style="left:527.4px;top:835.80px;font-size:16.3px;line-height:16.3px;color:#1f2128;font-weight:400;letter-spacing:-0.28px;">FutureEngineers</div>
<div class="t" style="left:776px;top:836.40px;font-size:16.3px;line-height:16.3px;color:#1f2128;font-weight:400;">Event Floor</div>
<div class="r" style="left:1120px;top:829.7px;width:64px;height:32px;background:#effefe;"></div>
<div class="r" style="left:1120px;top:837.7px;width:64px;height:17px;background:#c6fcfc;"></div>
<div class="r" style="left:1136px;top:829.7px;width:32px;height:32px;background:#c6fcfc;"></div>
<div class="r" style="left:1128px;top:832.7px;width:45.5px;height:27px;background:#20ae65;border-radius:14px;"></div>
<div class="r" style="left:1150.5px;top:836.9000000000001px;width:18.6px;height:18.6px;background:#fff;border-radius:50%;"></div>
<div class="t" style="left:1282px;top:836.40px;font-size:16.3px;line-height:16.3px;color:#1f2128;font-weight:400;">Configure Booth</div>
<svg class="r" style="left:1547px;top:837.7px;" width="17" height="17" viewBox="0 0 17 17"><path d="M2.2 14.8l.7-3.6 8.6-8.6c.6-.6 1.5-.6 2.1 0l.6.6c.6.6.6 1.5 0 2.1l-8.6 8.6zM9.8 4.3l2.9 2.9" fill="none" stroke="#4b4e56" stroke-width="1.8" stroke-linejoin="round"/></svg>
<svg class="r" style="left:1591px;top:836.2px;" width="20" height="20" viewBox="0 0 20 20"><g fill="none" stroke="#4b4e56" stroke-width="1.9" stroke-linejoin="round" stroke-linecap="round"><line x1="1.5" y1="4.5" x2="18.5" y2="4.5"/><path d="M7.3 4.2V2.2c0-.5.4-.9.9-.9h3.6c.5 0 .9.4.9.9v2"/><path d="M3.6 4.5v12.3c0 .9.6 1.5 1.5 1.5h9.8c.9 0 1.5-.6 1.5-1.5V4.5"/><line x1="7.7" y1="9" x2="7.7" y2="12.5"/><line x1="12.3" y1="9" x2="12.3" y2="12.5"/></g></svg>
<svg class="r" style="left:1643px;top:837.2px;" width="6" height="18" viewBox="0 0 6 18"><g fill="#4b4e56"><circle cx="3" cy="2.4" r="2.2"/><circle cx="3" cy="9.1" r="2.2"/><circle cx="3" cy="15.8" r="2.2"/></g></svg>
<div class="r" style="left:320px;top:884.15px;width:1373px;height:77.45px;background:#f8f9fb;"></div>
<div class="r" style="left:320px;top:960.6px;width:1373px;height:1px;background:#f0f1f3;"></div>
<div class="r" style="left:347px;top:913.15px;width:17.5px;height:17.5px;background:#fff;border:1.2px solid #c9cbd0;border-radius:3.5px;box-sizing:border-box;"></div>
<div class="t" style="left:384.6px;top:914.11px;font-size:16px;line-height:16px;color:#1f2128;font-weight:400;letter-spacing:-0.2px;">337711</div>
<div class="t" style="left:527.4px;top:913.25px;font-size:16.3px;line-height:16.3px;color:#1f2128;font-weight:400;letter-spacing:-0.17px;">MediCure Clinics</div>
<div class="t" style="left:776px;top:913.85px;font-size:16.3px;line-height:16.3px;color:#1f2128;font-weight:400;">Event Floor</div>
<div class="r" style="left:1120px;top:907.15px;width:64px;height:32px;background:#effefe;"></div>
<div class="r" style="left:1120px;top:915.15px;width:64px;height:17px;background:#c6fcfc;"></div>
<div class="r" style="left:1136px;top:907.15px;width:32px;height:32px;background:#c6fcfc;"></div>
<div class="r" style="left:1128px;top:910.15px;width:45.5px;height:27px;background:#20ae65;border-radius:14px;"></div>
<div class="r" style="left:1150.5px;top:914.35px;width:18.6px;height:18.6px;background:#fff;border-radius:50%;"></div>
<div class="t" style="left:1282px;top:913.85px;font-size:16.3px;line-height:16.3px;color:#1f2128;font-weight:400;">Configure Booth</div>
<svg class="r" style="left:1547px;top:915.15px;" width="17" height="17" viewBox="0 0 17 17"><path d="M2.2 14.8l.7-3.6 8.6-8.6c.6-.6 1.5-.6 2.1 0l.6.6c.6.6.6 1.5 0 2.1l-8.6 8.6zM9.8 4.3l2.9 2.9" fill="none" stroke="#4b4e56" stroke-width="1.8" stroke-linejoin="round"/></svg>
<svg class="r" style="left:1591px;top:913.65px;" width="20" height="20" viewBox="0 0 20 20"><g fill="none" stroke="#4b4e56" stroke-width="1.9" stroke-linejoin="round" stroke-linecap="round"><line x1="1.5" y1="4.5" x2="18.5" y2="4.5"/><path d="M7.3 4.2V2.2c0-.5.4-.9.9-.9h3.6c.5 0 .9.4.9.9v2"/><path d="M3.6 4.5v12.3c0 .9.6 1.5 1.5 1.5h9.8c.9 0 1.5-.6 1.5-1.5V4.5"/><line x1="7.7" y1="9" x2="7.7" y2="12.5"/><line x1="12.3" y1="9" x2="12.3" y2="12.5"/></g></svg>
<svg class="r" style="left:1643px;top:914.65px;" width="6" height="18" viewBox="0 0 6 18"><g fill="#4b4e56"><circle cx="3" cy="2.4" r="2.2"/><circle cx="3" cy="9.1" r="2.2"/><circle cx="3" cy="15.8" r="2.2"/></g></svg>
</body></html>
